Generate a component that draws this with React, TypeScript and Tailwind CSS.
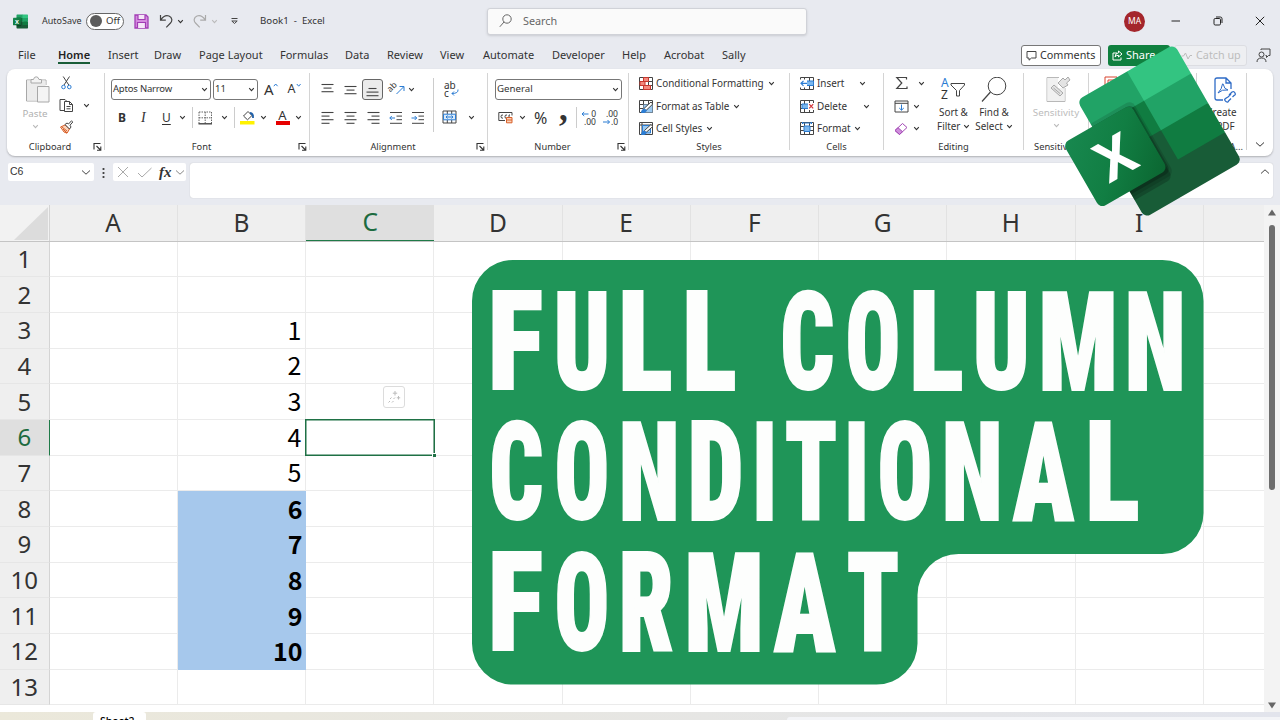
import type { ReactNode } from 'react';

const TABS = [
  { name: 'File', width: 'w-[40px]' },
  { name: 'Home', width: 'w-[50px]' },
  { name: 'Insert', width: 'w-[46px]' },
  { name: 'Draw', width: 'w-[45px]' },
  { name: 'Page Layout', width: 'w-[81px]' },
  { name: 'Formulas', width: 'w-[65px]' },
  { name: 'Data', width: 'w-[42px]' },
  { name: 'Review', width: 'w-[53px]' },
  { name: 'View', width: 'w-[43px]' },
  { name: 'Automate', width: 'w-[69px]' },
  { name: 'Developer', width: 'w-[70px]' },
  { name: 'Help', width: 'w-[42px]' },
  { name: 'Acrobat', width: 'w-[58px]' },
  { name: 'Sally', width: 'w-[40px]' },
];

const COLUMNS = ['A', 'B', 'C', 'D', 'E', 'F', 'G', 'H', 'I'];
const ROWS = Array.from({ length: 13 }, (_, i) => i + 1);

// Letter, gap before it, and printed width
type Glyph = [string, number, number];
const HEADLINE: Glyph[][] = [
  [['F', 0, 50], ['U', 15, 50], ['L', 15, 49], ['L', 15, 49], [' ', 0, 0], ['C', 48, 50], ['O', 15, 50], ['L', 15, 49], ['U', 14, 50.5], ['M', 15, 72], ['N', 14, 54]],
  [['C', 0, 50], ['O', 15, 50], ['N', 15, 54], ['D', 14.5, 50], ['I', 15, 17], ['T', 13, 50], ['I', 12, 17], ['O', 15, 50], ['N', 15, 54], ['A', 13, 63], ['L', 14, 49]],
  [['F', 0, 50], ['O', 15, 50], ['R', 15, 51], ['M', 15, 72], ['A', 13, 63.5], ['T', 11.5, 50]],
];

const FONT_SIZE = 140;
const CAP = 100;
const STROKE = 1;
const ctx = document.createElement('canvas').getContext('2d')!;

function HeadlineLetter({ glyph: [char, gap, width] }: { glyph: Glyph }) {
  if (char === ' ') return <span> </span>;
  ctx.font = `900 condensed ${FONT_SIZE}px Roboto`;
  const m = ctx.measureText(char);
  const sx = width / (m.actualBoundingBoxRight + m.actualBoundingBoxLeft + STROKE * 2);
  const sy = CAP / (m.actualBoundingBoxAscent + m.actualBoundingBoxDescent + STROKE * 2);
  const content = m.fontBoundingBoxAscent + m.fontBoundingBoxDescent;
  const baseline = (FONT_SIZE - content) / 2 + m.fontBoundingBoxAscent;
  const tx = (m.actualBoundingBoxLeft + STROKE) * sx;
  const ty = -(baseline - m.actualBoundingBoxAscent - STROKE) * sy;
  return (
    <span className="block h-[100px] shrink-0" style={{ width, marginLeft: gap }}>
      <span
        className="block w-max origin-top-left text-[140px] leading-none font-black font-stretch-condensed [-webkit-text-stroke:2px_#fdfefd] [stroke-linejoin:round]"
        style={{ transform: `matrix(${sx}, 0, 0, ${sy}, ${tx}, ${ty})` }}
      >
        {char}
      </span>
    </span>
  );
}

function Icon({ w, h, className = '', children }: { w: number; h: number; className?: string; children: ReactNode }) {
  return (
    <svg width={w} height={h} viewBox={`0 0 ${w} ${h}`} fill="none" stroke="#444" strokeWidth="1" className={`block shrink-0 ${className}`}>
      {children}
    </svg>
  );
}

function Chevron({ className = '', color = '#333' }: { className?: string; color?: string }) {
  return (
    <Icon w={7} h={5} className={className}>
      <path d="M1.2 1.2 3.5 3.6 5.8 1.2" stroke={color} strokeWidth="1.1" />
    </Icon>
  );
}

function Launcher() {
  return (
    <Icon w={9} h={9}>
      <path d="M1 7.5V1.5H7.5M3.5 4 7.5 8M7.8 4.5V8.2H4" stroke="#333" strokeWidth="1.1" />
    </Icon>
  );
}

function Group({ width, label, labelClass = 'text-center', launcher, children }: { width: string; label: string; labelClass?: string; launcher?: boolean; children: ReactNode }) {
  return (
    <div className={`flex h-full shrink-0 ${width}`}>
      <div className="flex min-w-0 flex-1 flex-col">
        <div className="h-[70px]">{children}</div>
        <div className="flex h-[15px] items-center">
          <span className={`flex-1 text-[9.3px] whitespace-nowrap ${labelClass}`}>{label}</span>
          {launcher && <span className="w-[11px]"><Launcher /></span>}
        </div>
      </div>
      <span className="mt-1 h-[77px] w-px bg-[#d4d4d4]" />
    </div>
  );
}

function ExcelMark() {
  return (
    <g stroke="none">
      <path d="M19.581 15.35 8.512 13.4V27.809A1.192 1.192 0 0 0 9.705 29h19.1A1.192 1.192 0 0 0 30 27.809V22.5Z" fill="#185c37" />
      <path d="M19.581 3H9.705A1.192 1.192 0 0 0 8.512 4.191V9.5L19.581 16l5.861 1.95L30 16V9.5Z" fill="#21a366" />
      <path d="M8.512 9.5H19.581V16H8.512Z" fill="#107c41" />
      <path d="M28.806 3H19.581V9.5H30V4.191A1.192 1.192 0 0 0 28.806 3Z" fill="#33c481" />
      <path d="M19.581 16H30v6.5H19.581Z" fill="#107c41" />
      <path d="M16.434 8.2H8.512V24.45h7.922a1.2 1.2 0 0 0 1.194-1.191V9.395A1.2 1.2 0 0 0 16.434 8.2Z" fill="#000" opacity=".12" />
      <path d="M15.783 8.85H8.512V25.1h7.271a1.2 1.2 0 0 0 1.194-1.191V10.045A1.2 1.2 0 0 0 15.783 8.85Z" fill="#000" opacity=".2" />
      <path d="M16.1 8.85H8.512V23.8h7.6a1.2 1.2 0 0 0 1.194-1.191V10.045A1.2 1.2 0 0 0 16.1 8.85Z" fill="#000" opacity=".2" />
      <rect x="2" y="8.85" width="14.977" height="14.3" rx="1.19" fill="url(#plate)" />
    </g>
  );
}

function AlignLines({ lines, y = 0 }: { lines: [number, number][]; y?: number }) {
  return (
    <Icon w={14} h={14}>
      {lines.map(([a, b], i) => (
        <path key={i} d={`M${a} ${y + 1.5 + i * 3.6}H${b}`} stroke="#444" strokeWidth="1.1" />
      ))}
    </Icon>
  );
}

// Small table used by the Styles and Cells commands
function TableIcon({ children }: { children?: ReactNode }) {
  return (
    <Icon w={14} h={13}>
      <path d="M.5.5H13.5V12.5H.5ZM4.5.5V12.5M9.5.5V12.5M.5 4.5H13.5M.5 8.5H13.5" />
      {children}
    </Icon>
  );
}

function Command({ icon, label, chevron = 'ml-1' }: { icon: ReactNode; label: string; chevron?: string }) {
  return (
    <div className="flex h-[22.7px] items-center">
      {icon}
      <span className="ml-[3px] text-[9.9px] whitespace-nowrap">{label}</span>
      <Chevron className={chevron} />
    </div>
  );
}

function TitleBar() {
  return (
    <div className="flex h-[42px] items-center text-[9.5px] text-[#333]">
      <svg viewBox="2 2 28 28" className="ml-[13px] h-[15px] w-[15px]">
        <defs>
          <linearGradient id="plate" x1="0" y1="0" x2="1" y2="1">
            <stop offset="0" stopColor="#18884f" />
            <stop offset=".5" stopColor="#117e43" />
            <stop offset="1" stopColor="#0b6631" />
          </linearGradient>
        </defs>
        <ExcelMark />
        <text x="9.5" y="20" textAnchor="middle" fontSize="11" fontWeight="700" fill="#fff">X</text>
      </svg>
      <span className="ml-[14px] w-[44px] text-[9px]">AutoSave</span>
      <span className="flex h-[17px] w-[38px] items-center rounded-full border border-[#666] bg-white pl-[3px]">
        <span className="h-3 w-3 rounded-full bg-[#5c5c5c]" />
        <span className="ml-1 text-[9.5px]">Off</span>
      </span>
      <Icon w={15} h={15} className="ml-[10px]">
        <path d="M1 1H12L14 3V14H1Z" fill="#d58be0" stroke="#a13db4" strokeWidth="1.3" />
        <path d="M4 1V5.5H11V1M3.5 14V8.5H11.5V14" fill="#f5e6f8" stroke="#a13db4" strokeWidth="1.2" />
      </Icon>
      <Icon w={14} h={14} className="ml-[10px]">
        <path d="M1.5 1V6.2H6.8M1.8 6C4 2.5 7 1 10 2 13.5 3.5 13.4 7 11.5 9L7.3 13.3" strokeWidth="1.2" />
      </Icon>
      <Chevron className="ml-[4px]" />
      <Icon w={14} h={14} className="ml-[9px]">
        <path d="M12.5 1V6.2H7.2M12.2 6C10 2.5 7 1 4 2 .5 3.5.6 7 2.5 9L6.7 13.3" stroke="#aaa" strokeWidth="1.2" />
      </Icon>
      <Chevron className="ml-1" color="#bbb" />
      <Icon w={9} h={8} className="ml-[12px]">
        <path d="M1.5 1.5H7.5M1.8 4 4.5 6.5 7.2 4Z" />
      </Icon>
      <span className="ml-[21px] w-[227px] text-[9.7px] whitespace-pre">Book1  -  Excel</span>
      <div className="flex h-[27px] w-[320px] items-center rounded-[3px] border border-[#d0d2d8] bg-[#fafafa] shadow-sm">
        <Icon w={13} h={14} className="ml-[11px]">
          <circle cx="8" cy="5" r="4.2" stroke="#666" />
          <path d="M5 8 .8 12.8" stroke="#666" />
        </Icon>
        <span className="ml-[11px] text-[10.8px] text-[#666]">Search</span>
      </div>
      <span className="ml-[317px] flex h-[21px] w-[21px] items-center justify-center rounded-full bg-[#a4262c] text-[8.5px] text-white">MA</span>
      <Icon w={10} h={10} className="ml-[26px]">
        <path d="M.5 5H9" stroke="#222" />
      </Icon>
      <Icon w={10} h={10} className="ml-[32px]">
        <rect x="1" y="2.5" width="6.5" height="6.5" rx="1.2" stroke="#222" />
        <path d="M3 1H7.3Q9 1 9 2.7V7" stroke="#222" />
      </Icon>
      <Icon w={10} h={10} className="ml-[32px]">
        <path d="M.8.8 9.2 9.2M9.2.8.8 9.2" stroke="#222" />
      </Icon>
    </div>
  );
}

function TabStrip() {
  return (
    <div className="flex h-[27px] items-center pl-[18px] text-[11px] text-[#333]">
      {TABS.map((t) => (
        <span key={t.name} className={`shrink-0 whitespace-nowrap ${t.width}`}>
          {t.name === 'Home' ? (
            <span className="relative font-semibold text-[#222]">
              Home
              <span className="absolute -bottom-[2px] left-0 h-[2px] w-full bg-[#185c37]" />
            </span>
          ) : (
            t.name
          )}
        </span>
      ))}
      <span className="ml-[259px] flex h-[21px] w-[80px] items-center rounded-[3px] border border-[#777] bg-white text-[10.8px]">
        <Icon w={11} h={11} className="ml-1">
          <path d="M1 1.5H10V8H5.5L3 10.2V8H1Z" />
        </Icon>
        <span className="ml-[3px]">Comments</span>
      </span>
      <span className="ml-[7px] flex h-[21px] w-[62px] items-center rounded-[3px] bg-[#10803f] text-[11px] text-white">
        <Icon w={11} h={11} className="ml-1">
          <path d="M5 3H1V10H9V7.5M6.5 1 10 4 6.5 7V5.3Q4.3 5.2 3 7 3.2 3 6.5 2.8Z" stroke="#fff" />
        </Icon>
        <span className="ml-[3px]">Share</span>
      </span>
      <span className="ml-1 flex h-[21px] w-[73px] items-center rounded-[3px] border border-[#dcdde2] bg-[#eeeff2] text-[10.8px] text-[#bdbdbd]">
        <Icon w={12} h={10} className="ml-[6px]">
          <path d="M.5 5H2.5L4.5 2 7 8 9 4.5H11" stroke="#bdbdbd" />
        </Icon>
        <span className="ml-[3px]">Catch up</span>
      </span>
      <Icon w={15} h={15} className="ml-[9px]">
        <circle cx="5.5" cy="6.5" r="2.5" />
        <path d="M1 14Q1 10 5.5 10T10 14M5 2V1H14V7.5H12.5L10.5 9.5V7.5H9.5" />
      </Icon>
    </div>
  );
}

function ClipboardGroup() {
  return (
    <div className="flex pl-[15px] text-[#b0b0b0]">
      <div className="flex w-[26px] flex-col items-center pt-[7px]">
        <Icon w={26} h={28} className="ml-[6px]">
          <path d="M6 4H1.5V25H12M17 4H21V9" stroke="#a8a8a8" />
          <path d="M2 4.5H20.5V10H12V24.5H2Z" fill="#ececec" stroke="none" />
          <path d="M6 3.5H8.5Q9 .8 11.2.8T14 3.5H16.5V7H6Z" fill="#f3f3f3" stroke="#a8a8a8" />
          <path d="M12.5 10.5H24V26H12.5Z" fill="#f4f4f4" stroke="#a8a8a8" />
        </Icon>
        <span className="text-[9.8px] leading-[19px]">Paste</span>
        <Chevron color="#b8b8b8" className="mt-px" />
      </div>
      <div className="flex flex-col pt-[7px] pl-[12px]">
        <Icon w={14} h={14}>
          <path d="M3.2.5 8.8 9M9.5.5 4 9" stroke="#444" />
          <circle cx="3.5" cy="11" r="1.8" stroke="#2b7cd3" />
          <circle cx="9.3" cy="11" r="1.8" stroke="#2b7cd3" />
        </Icon>
        <Icon w={15} h={15} className="mt-[8px] -ml-px">
          <path d="M5 12.5H1V1.5H6L8 3.5M5.5 3.5H10.5L13.5 6.5V13.5H5.5ZM10.5 3.5V6.5H13.5M7.5 8.5H11.5M7.5 10.8H11.5" />
        </Icon>
        <Icon w={15} h={14} className="mt-[7px] -ml-px">
          <path d="M1.5 7 6 5 10.5 9 8 13.2 5 12Z" fill="#fbd5bd" stroke="#d8602a" />
          <path d="M4 9 8 13M3 7 8 11" stroke="#d8602a" />
          <path d="M6 4.5 8 3 9.5 4 12.5.8 13.8 2 11 5.2 12 7 10.5 9Z" fill="#fff" />
        </Icon>
      </div>
      <Chevron className="mt-[34px] ml-[9px]" />
    </div>
  );
}

function FontGroup() {
  return (
    <div className="pl-[6px]">
      <div className="flex items-center pt-[10px]">
        <span className="flex h-[21px] w-[100px] items-center justify-between rounded-[3px] border border-[#777] pr-[2px] pl-px text-[9.5px] tracking-[-0.2px]">
          Aptos Narrow <Chevron />
        </span>
        <span className="ml-[2px] flex h-[21px] w-[45px] items-center justify-between rounded-[3px] border border-[#777] pr-[2px] pl-px text-[9.5px]">
          11 <Chevron />
        </span>
        <span className="ml-[6px] text-[15px] leading-none">A</span>
        <Icon w={6} h={4} className="-mt-[9px] -ml-px">
          <path d="M.8 3.2 2.7 1 4.6 3.2" stroke="#2b7cd3" />
        </Icon>
        <span className="ml-[9px] text-[12.5px] leading-none">A</span>
        <Icon w={6} h={4} className="-mt-[9px]">
          <path d="M.8 1 2.7 3.2 4.6 1" stroke="#2b7cd3" />
        </Icon>
      </div>
      <div className="mt-[7px] flex h-[21px] items-center text-[12px]">
        <span className="ml-[7px] w-[23px] font-bold">B</span>
        <span className="w-[21px] font-['Liberation_Serif'] text-[14px] italic">I</span>
        <span className="w-[17px] underline underline-offset-2">U</span>
        <Chevron />
        <span className="ml-[6px] h-[21px] w-px bg-[#ccc]" />
        <Icon w={15} h={14} className="ml-[5px]">
          <path d="M1 1H13.5V12.5M1 1V12.5M7.2 1V12.5M1 6.8H13.5" strokeDasharray="1.5 1" stroke="#666" />
          <path d="M.5 12.8H14" strokeWidth="1.4" />
        </Icon>
        <Chevron className="ml-[8px]" />
        <span className="ml-[6px] h-[21px] w-px bg-[#ccc]" />
        <Icon w={15} h={15} className="ml-[5px]">
          <path d="M3.5 6 8 1.5 12 5.5 7.5 9.8Z" />
          <path d="M10 3Q13.5 3.5 13 8" stroke="#1f5fa8" strokeWidth="1.8" />
          <path d="M0 11H14.5V14.500H0Z" fill="#fff200" stroke="none" />
        </Icon>
        <Chevron className="ml-[5px]" />
        <span className="ml-[8px] flex w-[15px] flex-col items-center">
          <span className="text-[13px] leading-[11px]">A</span>
          <span className="h-[4px] w-[14px] bg-[#e60000]" />
        </span>
        <Chevron className="ml-[5px]" />
      </div>
    </div>
  );
}

function AlignmentGroup() {
  return (
    <div className="flex pl-[11px]">
      <div className="w-[112px]">
        <div className="flex items-center pt-[10px]">
          <AlignLines lines={[[0.5, 12.5], [2.5, 10.5], [0.5, 12.5]]} y={0} />
          <span className="ml-[9px]"><AlignLines lines={[[0.5, 12.5], [2.5, 10.5], [0.5, 12.5]]} y={2} /></span>
          <span className="ml-[4px] flex h-[21px] w-[21px] items-center justify-center rounded-[3px] border border-[#666] bg-[#ebebeb]">
            <AlignLines lines={[[2.5, 10.5], [0.5, 12.5], [0.5, 12.5]]} y={4} />
          </span>
          <span className="-mt-1 ml-[4px] w-[9px] -rotate-45 text-[8.5px] leading-none">ab</span>
          <Icon w={9} h={11} className="ml-0">
            <path d="M.5 10 7.5 3M3.5 2.5H8V7" stroke="#2b7cd3" />
          </Icon>
          <Chevron className="ml-[3px]" />
        </div>
        <div className="mt-[7px] flex h-[21px] items-center gap-[9px]">
          <AlignLines lines={[[0.5, 12.5], [0.5, 8.5], [0.5, 12.5], [0.5, 8.5]]} />
          <AlignLines lines={[[0.5, 12.5], [2.5, 10.5], [0.5, 12.5], [2.5, 10.5]]} />
          <AlignLines lines={[[0.5, 12.5], [4.5, 12.5], [0.5, 12.5], [4.5, 12.5]]} />
          <Icon w={14} h={14} className="-ml-px">
            <path d="M1 1.5H13M7.5 5.1H13M7.5 8.7H13M1 12.3H13" />
            <path d="M6 7H.8M2.8 5 .8 7 2.800 9" stroke="#2b7cd3" />
          </Icon>
          <Icon w={14} h={14} className="-ml-px">
            <path d="M1 1.5H13M7.5 5.1H13M7.5 8.7H13M1 12.3H13" />
            <path d="M.5 7H5.7M3.7 5 5.7 7 3.700 9" stroke="#2b7cd3" />
          </Icon>
        </div>
      </div>
      <span className="mt-[9px] h-[54px] w-px bg-[#ccc]" />
      <div className="pl-[8px]">
        <div className="mt-[12px] flex h-[18px] pl-[2px]">
          <span className="text-[10px] leading-[8px]">ab<br />c</span>
          <Icon w={9} h={8} className="mt-[8px] -ml-[6px]">
            <path d="M8 .5Q8.500 4.500 2 4.500M4 2.500 2 4.500 4 6.500" stroke="#2b7cd3" />
          </Icon>
        </div>
        <div className="mt-[9px] flex h-[18px] items-center">
          <Icon w={15} h={14}>
            <path d="M1 1H14V13H1ZM5.3 1V4M9.7 1V4M5.3 10V13M9.7 10V13" />
            <path d="M1.5 4.2H13.5V9.8H1.5Z" fill="#dcebf9" stroke="#2b7cd3" />
            <path d="M4 7H11M5.5 5.5 4 7 5.5 8.5M9.5 5.5 11 7 9.5 8.5" stroke="#2b7cd3" />
          </Icon>
          <Chevron className="ml-[11px]" />
        </div>
      </div>
    </div>
  );
}

function NumberGroup() {
  return (
    <div className="pl-[7px]">
      <div className="pt-[10px]">
        <span className="flex h-[21px] w-[127px] items-center justify-between rounded-[3px] border border-[#777] pr-[2px] pl-px text-[9.7px]">
          General <Chevron />
        </span>
      </div>
      <div className="mt-[7px] flex h-[21px] items-center">
        <Icon w={16} h={13} className="ml-[3px]">
          <path d="M7 9.5H.8V1.5H14V4.5" />
          <path d="M5 4Q3 3.5 3 5.5T5 7.2M9 4Q7 3.5 7 5.5T8 7.2M11 6V4H12" />
          <path d="M8.5 6.5H14V11.8H8.5ZM8.5 9H14" fill="#fbd0b5" stroke="#d8602a" />
        </Icon>
        <Chevron className="ml-[5px]" />
        <span className="ml-[8px] w-[16px] text-[16px] leading-none">%</span>
        <span className="-mt-[34px] ml-[9px] h-[20px] w-[9px] font-['Liberation_Serif'] text-[35px] leading-none font-bold">,</span>
        <span className="ml-[8px] h-[21px] w-px bg-[#ccc]" />
        <span className="ml-[4px] flex w-[15px] flex-col text-right text-[8.5px] leading-[8px]">
          <span className="flex items-center justify-between">
            <Icon w={8} h={6}><path d="M7.5 3H1M3.2 1 1 3 3.2 5" stroke="#2b7cd3" /></Icon>0
          </span>
          <span>.00</span>
        </span>
        <span className="ml-[7px] flex w-[15px] flex-col text-right text-[8.5px] leading-[8px]">
          <span>.00</span>
          <span className="flex items-center justify-between">
            <Icon w={8} h={6}><path d="M0 3H6.5M4.5 1 6.5 3 4.5 5" stroke="#2b7cd3" /></Icon>.0
          </span>
        </span>
      </div>
    </div>
  );
}

function StylesGroup() {
  return (
    <div className="pt-[3px] pl-[10px]">
      <Command
        label="Conditional Formatting"
        icon={
          <TableIcon>
            <path d="M4.5.5H9.5V4.5H4.5ZM1 4.5H6V8.5H1ZM4.5 8.5H11.5V12.500H4.500Z" fill="#f3897f" stroke="#c8382e" />
          </TableIcon>
        }
      />
      <Command
        label="Format as Table"
        icon={
          <TableIcon>
            <path d="M4.5 4.5H13.5V12.5H4.5Z" fill="#9cc9f0" stroke="none" />
            <path d="M3 12 5 8.5 12 2 13.8 4 7 10.5Z" fill="#fff" stroke="#444" />
            <path d="M2.5 12.5Q3 8.5 6 9.5T5.5 12.5Z" fill="#2b7cd3" stroke="#2b7cd3" />
          </TableIcon>
        }
      />
      <Command
        label="Cell Styles"
        icon={
          <Icon w={14} h={13}>
            <path d="M.5.5H13.5V12.5H.5ZM.5 3H13.5M3 .5V12.5" />
            <path d="M3.5 3.5H11.5V11H3.5Z" fill="#9cc9f0" stroke="#2b7cd3" />
            <path d="M4 11.5 5.5 8.5 12 2.5 13.8 4.5 7 10.5Z" fill="#fff" />
            <path d="M2.5 12.5Q3 8.5 6 9.5T5.5 12.5Z" fill="#2b7cd3" stroke="#2b7cd3" />
          </Icon>
        }
      />
    </div>
  );
}

function CellsGroup() {
  return (
    <div className="pt-[3px] pl-[10px]">
      <Command
        label="Insert"
        chevron="ml-[15px]"
        icon={
          <TableIcon>
            <path d="M5 4H13.5V8.5H5Z" fill="#7db8ee" stroke="#2b7cd3" />
            <path d="M0 2.5H7V10.5H0Z" fill="#fff" stroke="none" />
            <path d="M7 6.3H1M3.5 3.8 1 6.3 3.5 8.8" stroke="#2b7cd3" strokeWidth="1.2" />
          </TableIcon>
        }
      />
      <Command
        label="Delete"
        chevron="ml-[16px]"
        icon={
          <TableIcon>
            <path d="M2 4H9V8.5H2Z" fill="#7db8ee" stroke="#2b7cd3" />
            <path d="M8 3H14V10H8Z" fill="#fff" stroke="none" />
            <path d="M9.2 4.2 13.2 8.4M13.2 4.2 9.2 8.4" stroke="#d13438" strokeWidth="1.2" />
          </TableIcon>
        }
      />
      <Command
        label="Format"
        chevron="ml-[3px]"
        icon={
          <TableIcon>
            <path d="M4 4H10V9.5H4Z" fill="#7db8ee" stroke="#2b7cd3" />
            <path d="M2.5 0V2M2.5 1H11.5M11.5 0V2" stroke="#2b7cd3" />
          </TableIcon>
        }
      />
    </div>
  );
}

function EditingGroup() {
  return (
    <div className="flex pl-[10px]">
      <div className="flex w-[42px] flex-col pt-[3px]">
        <div className="flex h-[22.7px] items-center pl-px">
          <Icon w={14} h={14}><path d="M11.5 3.500V1.500H1.800L6.800 7 1.800 12.500H12V10.500" strokeWidth="1.2" /></Icon>
          <Chevron className="ml-[9px]" />
        </div>
        <div className="flex h-[22.7px] items-center">
          <Icon w={15} h={13}>
            <path d="M1 1H14V12H1ZM1 3.3H14" />
            <path d="M7.5 4.5V10.2M5.2 8 7.5 10.2 9.8 8" stroke="#2b7cd3" />
          </Icon>
          <Chevron className="ml-[4px]" />
        </div>
        <div className="flex h-[22.7px] items-center">
          <Icon w={15} h={14}>
            <path d="M1 8.5 8.5 1.5 13 5.5 5.5 12.5Z" stroke="#a347b5" />
            <path d="M1 8.5 4 5.7 8.5 9.7 5.5 12.5Z" fill="#cf8fdc" stroke="#a347b5" />
          </Icon>
          <Chevron className="ml-[4px]" />
        </div>
      </div>
      <div className="flex w-[36px] flex-col pt-[8px] text-[9.9px] leading-[14px]">
        <div className="flex h-[28px] pl-[5px]">
          <span className="flex w-[9px] flex-col text-[12px] leading-[12px]">
            <span className="text-[#2b7cd3]">A</span>
            <span>Z</span>
          </span>
          <Icon w={16} h={16} className="mt-[5px]"><path d="M1 1.5H14.5V3L9.5 8.5V14H6.5V8.5L1 3Z" /></Icon>
        </div>
        <span className="pl-[3px] whitespace-nowrap">Sort &amp;</span>
        <span className="flex items-center pl-px whitespace-nowrap">Filter<Chevron className="ml-[3px]" /></span>
      </div>
      <div className="flex w-[44px] flex-col items-center pt-[8px] text-[9.9px] leading-[14px]">
        <Icon w={26} h={28}>
          <circle cx="16" cy="9" r="8.8" />
          <path d="M9.5 15 1 24.5" strokeWidth="1.2" />
        </Icon>
        <span className="whitespace-nowrap">Find &amp;</span>
        <span className="flex items-center whitespace-nowrap">Select<Chevron className="ml-[3px]" /></span>
      </div>
    </div>
  );
}

function Ribbon() {
  return (
    <div className="mx-[7px] flex h-[87px] rounded-[8px] bg-white text-[#333] shadow-[0_1px_2px_rgba(0,0,0,0.25)]">
      <Group width="w-[98px]" label="Clipboard" launcher><ClipboardGroup /></Group>
      <Group width="w-[205px]" label="Font" launcher><FontGroup /></Group>
      <Group width="w-[178px]" label="Alignment" launcher><AlignmentGroup /></Group>
      <Group width="w-[141px]" label="Number" launcher><NumberGroup /></Group>
      <Group width="w-[161px]" label="Styles"><StylesGroup /></Group>
      <Group width="w-[94px]" label="Cells"><CellsGroup /></Group>
      <Group width="w-[140px]" label="Editing"><EditingGroup /></Group>
      <Group width="w-[65px]" label="Sensitivity">
        <div className="flex flex-col items-center pt-[6px] text-[#bcbcbc]">
          <Icon w={26} h={29} className="ml-1">
            <path d="M2 2.5H14M20 13V26.5H2V2.5" stroke="#b8b8b8" />
            <path d="M2.5 3H13V13H19.5V26H2.5Z" fill="#f1f1f1" stroke="none" />
            <path d="M6 13 9 10 18 18 15 21ZM8.5 13 15 18.5M13 8 18 3 20 5 23 2 25 5 21.5 8 23 10 18 13Z" fill="#e3e3e3" stroke="#a8a8a8" />
          </Icon>
          <span className="text-[9.8px] leading-[17px]">Sensitivity</span>
          <Chevron color="#bbb" className="mt-[2px]" />
        </div>
      </Group>
      <Group width="w-[108px]" label="Add-ins">
        <div className="flex flex-col pt-[7px] pl-[15px]">
          <Icon w={14} h={24}>
            <path d="M1 1H13V12H1ZM4 4H10V9H4Z" stroke="#d8452f" />
          </Icon>
        </div>
      </Group>
      <Group width="w-[50px]" label="Adobe A..." labelClass="pr-[3px] text-right">
        <div className="flex flex-col items-center pt-[8px] text-[9.9px] leading-[14px]">
          <Icon w={24} h={27} className="ml-[6px]">
            <path d="M10 23H4Q2 23 2 21V3Q2 1 4 1H13L18 6V12M13 1V6H18" stroke="#2e6bc6" strokeWidth="1.3" />
            <path d="M5 16Q9 12 9.5 7 10 6 10.5 8 11 12 15 13 9 12 5 16Z" stroke="#2e6bc6" />
            <path d="M16 18 19 15Q21 14 22 16T21 18.5L19.5 20M18 17 15 20Q13 21 12 22T13 24.5 15.5 24L18 21.5" stroke="#2e6bc6" strokeWidth="1.3" />
          </Icon>
          <span className="mt-px whitespace-nowrap">Create</span>
          <span className="whitespace-nowrap">a PDF</span>
        </div>
      </Group>
      <Icon w={10} h={7} className="mt-[72px] ml-[8px]"><path d="M1 1.5 5 5.2 9 1.5" stroke="#333" /></Icon>
    </div>
  );
}

function FormulaBar() {
  return (
    <div className="flex h-[49px] pt-[7px] pl-2 text-[#333]">
      <div className="flex h-[18px] w-[86px] items-center justify-between rounded-[2px] bg-white pr-[3px] pl-[2px] font-['Liberation_Sans'] text-[10.5px]">
        C6
        <Icon w={10} h={7}><path d="M1 1.5 5 5.2 9 1.5" /></Icon>
      </div>
      <Icon w={3} h={12} className="mt-1 ml-[8px]">
        <path d="M1.5 1V3M1.5 5V7M1.5 9V11" strokeWidth="1.8" />
      </Icon>
      <div className="ml-[8px] flex h-[18px] w-[73px] items-center rounded-[2px] bg-white">
        <Icon w={12} h={12} className="ml-[4px]"><path d="M1 1 11 11M11 1 1 11" stroke="#aaa" /></Icon>
        <Icon w={16} h={11} className="ml-[8px]"><path d="M1 6 5 10 14.5 1" stroke="#aaa" /></Icon>
        <span className="ml-[6px] font-['Liberation_Serif'] text-[15px] leading-none font-bold italic">fx</span>
        <Icon w={10} h={7} className="ml-[3px]"><path d="M1 1.5 5 5.2 9 1.5" stroke="#888" /></Icon>
      </div>
      <div className="ml-[4px] flex h-[35px] w-[1083px] justify-end rounded-[3px] bg-white shadow-[0_0_1px_rgba(0,0,0,0.25)]">
        <Icon w={10} h={7} className="mt-[5px] mr-[3px]"><path d="M1 5.5 5 1.8 9 5.5" /></Icon>
      </div>
    </div>
  );
}

function Sheet() {
  return (
    <div className="relative flex h-[507px] bg-white">
      <div className="flex w-[1264px] flex-col overflow-hidden">
        <div className="flex h-[36.5px] shrink-0 border-b border-[#c4c4c4] bg-[#efefef] text-[24.5px] text-[#333]">
          <div className="flex w-[49.5px] shrink-0 items-end justify-end border-r border-[#d4d4d4] bg-[#f2f2f2]">
            <svg width="35" height="34" viewBox="0 0 35 34"><path d="M34 0V33H0Z" fill="#dcdcdc" /></svg>
          </div>
          {COLUMNS.map((c) => (
            <div
              key={c}
              className={`flex w-[128.25px] shrink-0 items-center justify-center leading-none ${
                c === 'C' ? 'border-b-[1.5px] border-[#1f7a48] bg-[#dfdfdf] text-[#1c6b40]' : 'border-r border-[#e2e2e2]'
              }`}
            >
              {c}
            </div>
          ))}
        </div>
        {ROWS.map((r) => (
          <div key={r} className="flex h-[35.7px] shrink-0">
            <div
              className={`flex w-[49.5px] shrink-0 items-center justify-center border-b border-[#e6e6e6] text-[24px] leading-none ${
                r === 6 ? 'border-r-[1.5px] border-r-[#1f7a48] bg-[#dfdfdf] text-[#1c6b40]' : 'border-r border-r-[#d4d4d4] bg-[#efefef] text-[#333]'
              }`}
            >
              {r}
            </div>
            {COLUMNS.map((c) => {
              const value = c === 'B' && r >= 3 && r <= 12 ? r - 2 : '';
              const filled = c === 'B' && r >= 8 && r <= 12;
              return (
                <div
                  key={c}
                  className={`flex w-[128.25px] shrink-0 items-center justify-end pr-[3.5px] pb-[2px] font-['Noto_Sans_CJK_SC'] text-[25px] leading-none text-black ${
                    filled ? 'bg-[#a6c8ec] font-bold' : 'border-r border-b border-[#ebebeb]'
                  }`}
                >
                  {value}
                </div>
              );
            })}
            <div className="flex-1 border-b border-[#ebebeb]" />
          </div>
        ))}
      </div>
      <div className="flex w-4 flex-col items-center bg-[#f3f3f3]">
        <Icon w={8} h={7} className="mt-[4px]"><path d="M4 .5 8 6.5H0Z" fill="#666" stroke="none" /></Icon>
        <span className="mt-[9px] h-[265px] w-[6px] rounded-full bg-[#6e6e6e]" />
        <Icon w={8} h={7} className="mt-auto mb-[3px]"><path d="M0 .5H8L4 6.5Z" fill="#666" stroke="none" /></Icon>
      </div>
      {/* active cell C6 */}
      <div className="absolute top-[214px] left-[305px] h-[37px] w-[130px] border border-[#1f7145] shadow-[inset_0_0_0_0.5px_#1f7145]">
        <span className="absolute -right-[2px] -bottom-[2px] h-[4px] w-[4px] border-t border-l border-white bg-[#1f7145]" />
      </div>
      {/* quick analysis hint */}
      <div className="absolute top-[181px] left-[383px] flex h-[22px] w-[22px] items-center justify-center rounded-[3px] border border-[#dcdcdc] bg-white">
        <Icon w={14} h={14}>
          <path d="M8 1V5.5M5.8 3.2H10.2M11.5 6V9.5M9.8 7.8H13.2M1.5 12.5 3 11M5 12.5 6.5 11M3 9 4.5 7.5M6.5 9 8 7.5" stroke="#bbb" />
        </Icon>
      </div>
    </div>
  );
}

function Headline() {
  return (
    <div className="absolute top-[260px] left-[472px] h-[425px] w-[732px]">
      <svg width="732" height="425" viewBox="0 0 732 425" className="absolute inset-0">
        <path
          d="M41 0H690.5A41 41 0 0 1 731.5 41V253A41 41 0 0 1 690.5 294H486.5A41 41 0 0 0 445.5 335V383.5A41 41 0 0 1 404.5 424.5H41A41 41 0 0 1 0 383.5V41A41 41 0 0 1 41 0Z"
          fill="#1f9558"
        />
      </svg>
      <h1 className="relative flex flex-col gap-[30.5px] pt-[30.5px] pl-[20.3px] font-['Roboto'] text-[#fdfefd]">
        {HEADLINE.map((line, i) => (
          <span key={i} className="flex h-[100px]">
            {line.map((g, j) => (
              <HeadlineLetter key={j} glyph={g} />
            ))}
          </span>
        ))}
      </h1>
    </div>
  );
}

export default function App() {
  return (
    <div className="relative flex h-[720px] w-[1280px] flex-col overflow-hidden bg-[#e8eaf0] font-['Noto_Sans',sans-serif]">
      <TitleBar />
      <TabStrip />
      <Ribbon />
      <FormulaBar />
      <Sheet />
      <div className="flex h-2 justify-between bg-linear-to-r from-[#ebe8da] to-[#e2e4ec]">
        <div className="ml-[93px] h-2 w-[53px] overflow-hidden rounded-t-[3px] bg-white pl-[7px] text-[10.5px] leading-[19px] font-medium whitespace-nowrap">Sheet2</div>
        <div className="mt-[5px] h-[3px] w-[493px] rounded-tl bg-[#f3f4f7]" />
      </div>
      <Headline />
      <svg width="190" height="190" viewBox="0 0 190 190" className="absolute top-[36px] left-[1057px]">
        <g transform="translate(102.5 95) rotate(-30) scale(5.22) translate(-19.256 -16)">
          <ExcelMark />
          <text x="9.4" y="19.9" textAnchor="middle" fontSize="10.7" fontWeight="700" fill="#fff">X</text>
        </g>
      </svg>
    </div>
  );
}
